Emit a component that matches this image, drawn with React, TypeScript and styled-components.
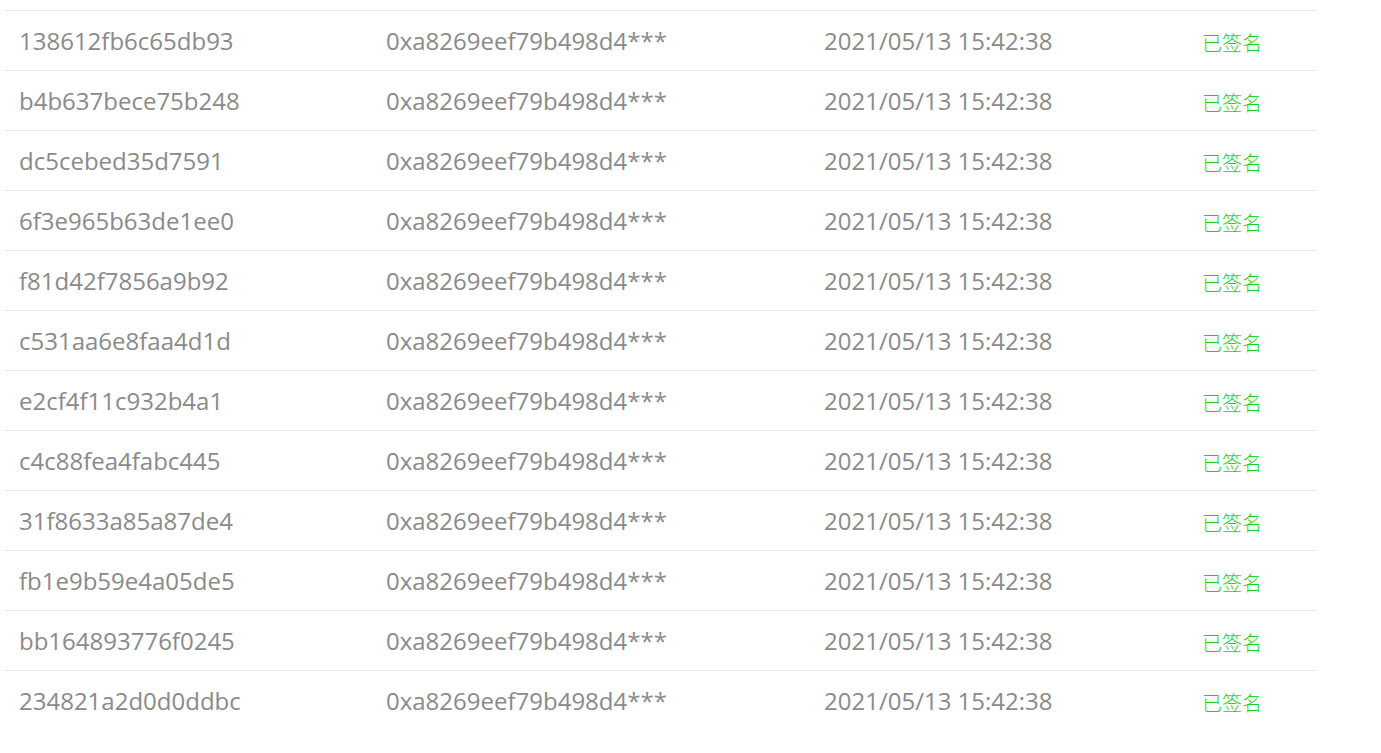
import React from "react";
import styled, { createGlobalStyle } from "styled-components";

const Global = createGlobalStyle`
  html, body { margin: 0; padding: 0; background: #fff; }
  body { font-family: "Open Sans", "Noto Sans CJK SC", sans-serif; }
`;

const Wrap = styled.div`
  padding: 10px 0 0 5px;
  width: 1311px;
`;

const Row = styled.div`
  display: grid;
  grid-template-columns: 367px 438px 378px 1fr;
  height: 60px;
  box-sizing: border-box;
  border-top: 1px solid #e8e8ec;
  align-items: center;
`;

const Cell = styled.div<{ $status?: boolean }>`
  padding-left: 14px;
  font-size: ${(p) => (p.$status ? "20px" : "24px")};
  color: ${(p) => (p.$status ? "#1fd01f" : "#8a8a8a")};
  font-family: ${(p) =>
    p.$status ? '"Noto Sans CJK SC", sans-serif' : '"Open Sans", sans-serif'};
  font-weight: ${(p) => (p.$status ? 300 : 400)};
  white-space: nowrap;
  ${(p) => (p.$status ? "padding-top: 4px;" : "padding-bottom: 1px;")}
`;

const ids = [
  "138612fb6c65db93",
  "b4b637bece75b248",
  "dc5cebed35d7591",
  "6f3e965b63de1ee0",
  "f81d42f7856a9b92",
  "c531aa6e8faa4d1d",
  "e2cf4f11c932b4a1",
  "c4c88fea4fabc445",
  "31f8633a85a87de4",
  "fb1e9b59e4a05de5",
  "bb164893776f0245",
  "234821a2d0d0ddbc",
];

export default function App() {
  return (
    <>
      <Global />
      <Wrap>
        {ids.map((id) => (
          <Row key={id}>
            <Cell>{id}</Cell>
            <Cell>0xa8269eef79b498d4***</Cell>
            <Cell>2021/05/13 15:42:38</Cell>
            <Cell $status>已签名</Cell>
          </Row>
        ))}
      </Wrap>
    </>
  );
}
